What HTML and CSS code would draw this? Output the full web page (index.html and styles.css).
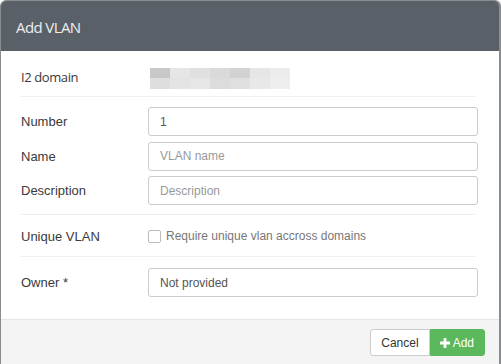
FILE: index.html
```html
<!DOCTYPE html>
<html lang="en">

<head>
    <meta charset="UTF-8" />
    <meta name="viewport" content="width=device-width, initial-scale=1.0" />
    <title>Add VLAN</title>
    <link rel="stylesheet" href="styles.css">
</head>

<body>
    <div class="modal">
        <div class="modal-header">
            <h4>Add VLAN</h4>
        </div>
        <div class="modal-body">
            <div class="row static">
                <label class="label domain-label">I2 domain</label>
                <!-- value is pixelated in the original -->
                <div class="blur">
                    <span class="c1"></span><span class="c2"></span><span class="c3"></span><span class="c4"></span><span class="c5"></span><span class="c6"></span><span class="c7"></span>
                    <span class="d1"></span><span class="d2"></span><span class="d3"></span><span class="d4"></span><span class="d5"></span><span class="d6"></span><span class="d7"></span>
                </div>
            </div>
            <hr>
            <div class="group">
                <div class="row">
                    <label class="label" for="number">Number</label>
                    <input type="text" id="number" value="1" />
                </div>
                <div class="row">
                    <label class="label" for="name">Name</label>
                    <input type="text" id="name" placeholder="VLAN name" />
                </div>
                <div class="row">
                    <label class="label" for="description">Description</label>
                    <input type="text" id="description" placeholder="Description" />
                </div>
            </div>
            <hr>
            <div class="row check-row">
                <span class="label">Unique VLAN</span>
                <label class="check"><input type="checkbox" /> <span>Require unique vlan accross domains</span></label>
            </div>
            <hr>
            <div class="group owner">
                <div class="row">
                    <label class="label" for="owner">Owner *</label>
                    <input type="text" id="owner" value="Not provided" />
                </div>
            </div>
        </div>
        <div class="modal-footer">
            <button class="btn">Cancel</button>
            <button class="btn btn-success">
                <svg width="10" height="10" viewBox="0 0 10 10"><path d="M3.6 0h2.8v3.6H10v2.8H6.4V10H3.6V6.4H0V3.6h3.6z" fill="#fff"/></svg>
                Add
            </button>
        </div>
    </div>
</body>

</html>
```

FILE: styles.css
```css
* {
    margin: 0;
    padding: 0;
    box-sizing: border-box;
}

body {
    font-family: "Liberation Sans", Arial, sans-serif;
    font-size: 13px;
    color: #3a3a3a;
    background-color: #ffffff;
}

.modal {
    width: 501px;
    min-height: 364px;
    border: 1px solid #8a8d90;
    border-right-width: 2px;
    border-bottom: none;
    border-radius: 6px 6px 0 0;
    display: flex;
    flex-direction: column;
    overflow: hidden;
}

.modal-header {
    height: 50px;
    background-color: #5a6068;
    padding: 0 15px;
    display: flex;
    align-items: center;
}

.modal-header h4 {
    font-family: "Open Sans", sans-serif;
    font-weight: normal;
    font-size: 15px;
    letter-spacing: -0.6px;
    color: #eeeeee;
    padding-top: 2px;
}

.modal-body {
    padding: 0 20px 22px 20px;
}

hr {
    border: none;
    border-top: 1px solid #eeeeee;
    margin-right: 4px;
}

.row {
    display: flex;
    align-items: center;
}

.label {
    width: 127px;
    flex-shrink: 0;
}

.static {
    height: 45px;
    padding-top: 7px;
}

.domain-label {
    font-family: "Open Sans", sans-serif;
    font-size: 13px;
    letter-spacing: -0.4px;
}

.blur {
    display: grid;
    grid-template-columns: repeat(7, 20px);
    grid-template-rows: 10px 11px;
    margin-left: 2px;
    margin-top: 2px;
}

.c1 { background: #c8c8c8; }
.c2 { background: #e6e6e6; }
.c3 { background: #e0e0e0; }
.c4 { background: #dadada; }
.c5 { background: #d2d2d2; }
.c6 { background: #e6e6e6; }
.c7 { background: #ececec; }
.d1 { background: #dedede; }
.d2 { background: #e4e4e4; }
.d3 { background: #e6e6e6; }
.d4 { background: #dcdcdc; }
.d5 { background: #e0e0e0; }
.d6 { background: #e8e8e8; }
.d7 { background: #eeeeee; }

.group {
    padding: 10px 0 9px 0;
    display: flex;
    flex-direction: column;
    gap: 5.5px;
}

.owner {
    padding: 11px 0 0 0;
}

input[type=text] {
    width: 330px;
    height: 29px;
    border: 1px solid #cccccc;
    border-radius: 3px;
    padding: 0 11px;
    font-family: "Liberation Sans", Arial, sans-serif;
    font-size: 12px;
    color: #555555;
    outline: none;
}

input::placeholder {
    color: #999999;
}

.check-row {
    height: 41px;
    padding-top: 1px;
}

.check {
    display: flex;
    align-items: center;
    font-size: 12px;
    color: #777777;
}

.check input {
    appearance: none;
    width: 13px;
    height: 13px;
    border: 1px solid #bbbbbb;
    border-radius: 2px;
    margin-right: 5px;
    margin-top: 1px;
}

.modal-footer {
    flex-grow: 1;
    background-color: #f4f4f4;
    border-top: 1px solid #e5e5e5;
    display: flex;
    justify-content: flex-end;
    align-items: flex-start;
    padding: 9px 14px 0 0;
}

.btn {
    height: 27px;
    font-family: "Liberation Sans", Arial, sans-serif;
    font-size: 12px;
    color: #333333;
    background-color: #ffffff;
    border: 1px solid #cccccc;
    border-radius: 3px 0 0 3px;
    padding: 0 10px;
    display: flex;
    align-items: center;
    gap: 3px;
}

.btn-success {
    background-color: #5cb85c;
    border-color: #5cb85c;
    color: #ffffff;
    border-radius: 0 3px 3px 0;
    padding: 0 10px 0 9px;
}
```
